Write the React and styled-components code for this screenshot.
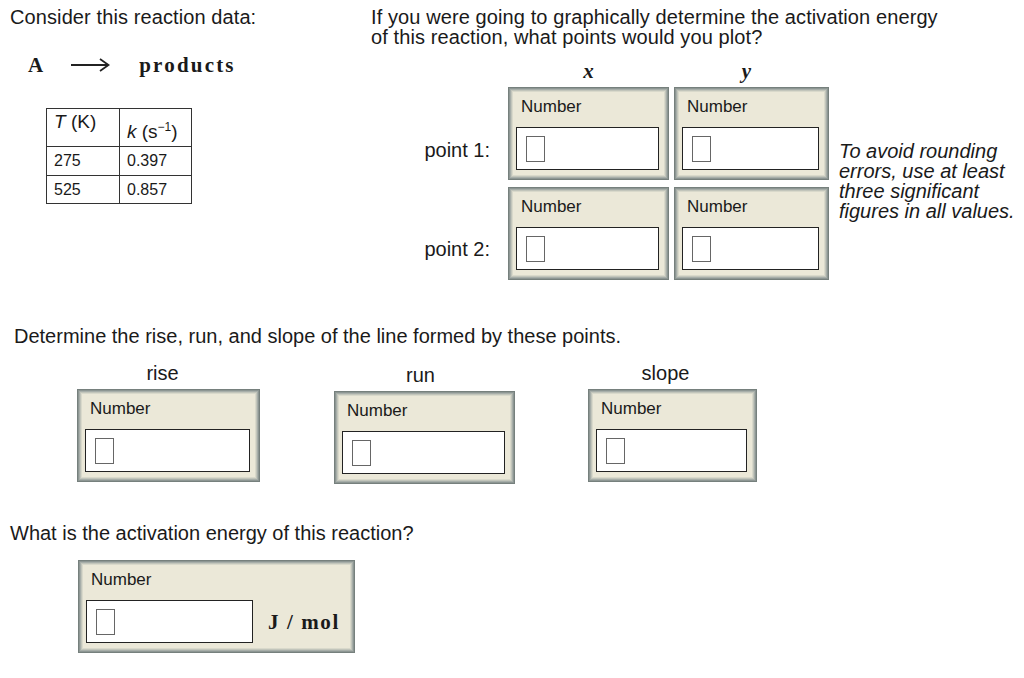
import React from 'react'
import styled, { createGlobalStyle } from 'styled-components'

const Global = createGlobalStyle`
  body {
    margin: 0;
    background: #fff;
    color: #1a1a1a;
    font-family: "Liberation Sans", Arial, sans-serif;
  }
`

const Page = styled.div`
  width: 1024px;
  height: 678px;
  overflow: hidden;
`

const Top = styled.section`
  display: flex;
`

const LeftCol = styled.div`
  width: 361px;
  padding: 7px 0 0 10px;
`

const RightCol = styled.div`
  flex: 1;
  padding-top: 7px;
`

const Text = styled.p`
  margin: 0;
  font-size: 20px;
  line-height: 20px;
  letter-spacing: ${p => p.$ls || 0}px;
`

const Reaction = styled.div`
  display: flex;
  align-items: center;
  height: 24px;
  margin: 26px 0 0 18px;
  font-family: "Liberation Serif", "Times New Roman", serif;
  font-weight: bold;
  font-size: 21px;
`

const Species = styled.span`
  letter-spacing: ${p => p.$spaced ? '2.2px' : '0'};
`

const Arrow = styled.svg`
  margin: 0 29px 0 28px;
`

const Table = styled.table`
  border-collapse: collapse;
  margin: 31px 0 0 36px;
  font-size: 16px;
`

const Cell = styled.td`
  border: 1px solid #333;
  padding: 0 0 0 7px;
  height: ${p => p.$h}px;
  width: ${p => p.$w}px;
  vertical-align: middle;
  box-sizing: border-box;
`

const HeadCell = styled(Cell)`
  font-size: 19px;
  vertical-align: ${p => p.$va};
  padding-top: ${p => p.$va === 'top' ? 2 : 0}px;
  padding-bottom: ${p => p.$va === 'bottom' ? 3 : 0}px;
`

const Sup = styled.sup`
  font-size: 12px;
`

const Grid = styled.div`
  display: grid;
  grid-template-columns: 132px 161px 155px 1fr;
  grid-template-rows: 18px 93px 92px;
  column-gap: 5px;
  row-gap: 7px;
  margin-top: 15px;
`

const Axis = styled.div`
  grid-column: ${p => p.$col};
  text-align: center;
  padding-right: ${p => p.$nudge || 0}px;
  font-family: "Liberation Serif", "Times New Roman", serif;
  font-weight: bold;
  font-style: italic;
  font-size: 21px;
  line-height: 18px;
`

const PointLabel = styled.div`
  grid-column: 1;
  display: flex;
  align-items: flex-end;
  justify-content: flex-end;
  padding: 0 13px 20px 0;
  font-size: 20px;
  line-height: 20px;
`

const Hint = styled.div`
  grid-column: 4;
  grid-row: 2 / 4;
  margin: 54px 0 0 5px;
  font-size: 20px;
  line-height: 20px;
  font-style: italic;
`

const Box = styled.div`
  box-sizing: border-box;
  width: ${p => p.$w}px;
  height: 93px;
  padding: 9px 9px 9px 7px;
  background: #ebe8d8;
  border: 1px solid #76807d;
  box-shadow:
    inset 0 0 0 1px #8d9693,
    inset 0 0 0 2px #a7aea9,
    inset 0 0 0 3px #c2c5bb,
    inset 0 0 0 4px #d9d9cb;
`

const BoxLabel = styled.div`
  font-size: 17px;
  line-height: 20px;
  padding-left: 5px;
  margin-bottom: 10px;
`

const FieldRow = styled.div`
  display: flex;
  align-items: center;
  gap: 15px;
`

const Field = styled.div`
  box-sizing: border-box;
  flex: ${p => p.$w ? 'none' : 1};
  width: ${p => p.$w ? `${p.$w}px` : 'auto'};
  height: 43px;
  background: #fff;
  border: 1px solid #222;
  padding: 8px 0 0 9px;
`

const Caret = styled.div`
  width: 19px;
  height: 26px;
  box-sizing: border-box;
  border: 1px solid #666;
`

const Unit = styled.span`
  font-family: "Liberation Serif", "Times New Roman", serif;
  font-weight: bold;
  font-size: 21px;
  letter-spacing: 1.6px;
  padding-top: 2px;
`

const Section = styled.section`
  padding-left: ${p => p.$pad}px;
  margin-top: ${p => p.$top}px;
`

const Steps = styled.div`
  display: flex;
  margin: 17px 0 0 63px;
`

const Step = styled.div`
  display: flex;
  flex-direction: column;
  align-items: center;
  margin-right: ${p => p.$gap}px;
  padding-top: ${p => p.$shift || 0}px;
`

const StepLabel = styled.div`
  font-size: 20px;
  line-height: 20px;
  margin: 0 ${p => p.$nudge}px 6px 0;
`

const Answer = styled.div`
  margin: 17px 0 0 68px;
`

const InputBox = ({ w, fieldW, children }) => (
  <Box $w={w}>
    <BoxLabel>Number</BoxLabel>
    <FieldRow>
      <Field $w={fieldW}><Caret /></Field>
      {children}
    </FieldRow>
  </Box>
)

const ArrowIcon = () => (
  <Arrow width="39" height="16" viewBox="0 0 39 16">
    <path d="M0 8 H37" stroke="#222" strokeWidth="1.8" fill="none" />
    <path d="M29 2 L37.5 8 L29 14" stroke="#222" strokeWidth="1.8" fill="none" />
  </Arrow>
)

export default function App() {
  return (
    <Page>
      <Global />
      <Top>
        <LeftCol>
          <Text $ls={0.1}>Consider this reaction data:</Text>
          <Reaction>
            <Species>A</Species>
            <ArrowIcon />
            <Species $spaced>products</Species>
          </Reaction>
          <Table>
            <tbody>
              <tr>
                <HeadCell $h={38} $w={73} $va="top"><i>T</i> (K)</HeadCell>
                <HeadCell $h={38} $w={72} $va="bottom">
                  <i>k</i> (s<Sup>−1</Sup>)
                </HeadCell>
              </tr>
              <tr>
                <Cell $h={29}>275</Cell>
                <Cell $h={29}>0.397</Cell>
              </tr>
              <tr>
                <Cell $h={28}>525</Cell>
                <Cell $h={28}>0.857</Cell>
              </tr>
            </tbody>
          </Table>
        </LeftCol>
        <RightCol>
          <Text $ls={0.1}>
            If you were going to graphically determine the activation energy<br />
            of this reaction, what points would you plot?
          </Text>
          <Grid>
            <Axis $col={2}>x</Axis>
            <Axis $col={3} $nudge={10}>y</Axis>
            <PointLabel>point 1:</PointLabel>
            <InputBox w={161} />
            <InputBox w={155} />
            <Hint>
              To avoid rounding<br />
              errors, use at least<br />
              three significant<br />
              figures in all values.
            </Hint>
            <PointLabel>point 2:</PointLabel>
            <InputBox w={161} />
            <InputBox w={155} />
          </Grid>
        </RightCol>
      </Top>

      <Section $pad={14} $top={47}>
        <Text>Determine the rise, run, and slope of the line formed by these points.</Text>
        <Steps>
          <Step $gap={74}>
            <StepLabel $nudge={12}>rise</StepLabel>
            <InputBox w={183} />
          </Step>
          <Step $gap={73} $shift={2}>
            <StepLabel $nudge={8}>run</StepLabel>
            <InputBox w={181} />
          </Step>
          <Step>
            <StepLabel $nudge={14}>slope</StepLabel>
            <InputBox w={169} />
          </Step>
        </Steps>
      </Section>

      <Section $pad={10} $top={39}>
        <Text>What is the activation energy of this reaction?</Text>
        <Answer>
          <InputBox w={277} fieldW={167}>
            <Unit>J / mol</Unit>
          </InputBox>
        </Answer>
      </Section>
    </Page>
  )
}
